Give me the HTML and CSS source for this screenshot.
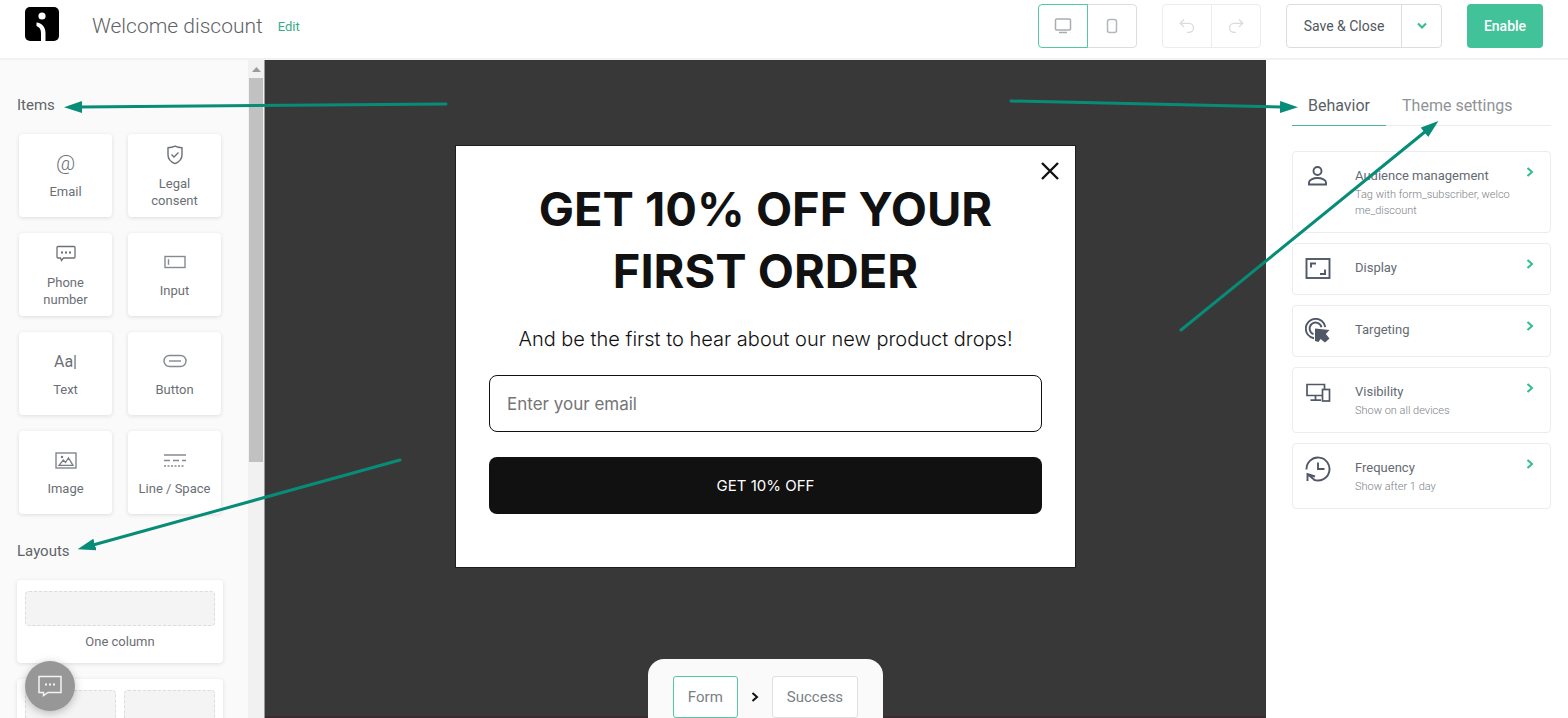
FILE: index.html
```html
<!DOCTYPE html>
<html lang="en">
<head>
    <meta charset="UTF-8">
    <meta name="viewport" content="width=device-width, initial-scale=1.0">
    <title>Welcome discount - Form builder</title>
    <link rel="stylesheet" href="styles.css">
</head>
<body>
    <header class="topbar">
        <a href="#" class="logo" aria-label="Home">
            <svg width="34" height="34" viewBox="0 0 34 34">
                <rect width="34" height="34" rx="5" fill="#000"/>
                <circle cx="17" cy="9" r="3.600" fill="#fff"/>
                <path d="M11.500 15.500c5.500.5 9 4.500 9 10.500v8h-4.500v-7c0-4-.5-6-4.500-8z" fill="#fff"/>
            </svg>
        </a>
        <h1 class="form-name">Welcome discount</h1>
        <a href="#" class="edit">Edit</a>
        <div class="actions">
            <div class="group devices">
                <button class="active" aria-label="Desktop">
                    <svg width="18" height="16" viewBox="0 0 18 16" fill="none" stroke="#a9adb1" stroke-width="1.500"><rect x="1.500" y="1" width="15" height="11" rx="1"/><path d="M5 14.500h8"/></svg>
                </button>
                <button aria-label="Mobile">
                    <svg width="12" height="16" viewBox="0 0 12 16" fill="none" stroke="#b4b7ba" stroke-width="1.500"><rect x="1.500" y="1.500" width="9" height="13" rx="2"/></svg>
                </button>
            </div>
            <div class="group history">
                <button aria-label="Undo">
                    <svg width="16" height="16" viewBox="0 0 16 16" fill="none" stroke="#d9dbdc" stroke-width="1.300"><path d="M5 1.500L1.200 5.300 5 9M1.200 5.300H10a4.500 4.500 0 0 1 0 9H8"/></svg>
                </button>
                <button aria-label="Redo">
                    <svg width="16" height="16" viewBox="0 0 16 16" fill="none" stroke="#d9dbdc" stroke-width="1.300"><path d="M11 1.500l3.800 3.800L11 9M14.800 5.300H6a4.500 4.500 0 0 0 0 9h2"/></svg>
                </button>
            </div>
            <div class="group save">
                <button>Save &amp; Close</button>
                <button aria-label="More save options">
                    <svg width="10" height="8" viewBox="0 0 10 8" fill="none" stroke="#2fbd8c" stroke-width="2"><path d="M1 1.500l4 4 4-4"/></svg>
                </button>
            </div>
            <button class="enable">Enable</button>
        </div>
    </header>

    <div class="workspace">
        <aside class="sidebar">
            <div class="sidebar-content">
                <h2>Items</h2>
                <div class="items">
                    <button class="item">
                        <span class="icon at">@</span>
                        Email
                    </button>
                    <button class="item">
                        <span class="icon"><svg width="18" height="20" viewBox="0 0 18 20" fill="none" stroke="#6b7077" stroke-width="1.400"><path d="M9 1.200c2.300 1.100 4.500 1.500 7 1.600V10c0 4-3 7-7 8.600C5 17 2 14 2 10V2.800c2.500-.1 4.700-.5 7-1.600z"/><path d="M5.500 9.500L8 12l4.500-4.500"/></svg></span>
                        Legal consent
                    </button>
                    <button class="item">
                        <span class="icon"><svg width="20" height="17" viewBox="0 0 20 17" fill="none" stroke="#6b7077" stroke-width="1.300"><path d="M2 1.500h16a1 1 0 0 1 1 1v9.500a1 1 0 0 1-1 1H7.500L5.500 15.500 4.500 13H2a1 1 0 0 1-1-1V2.500a1 1 0 0 1 1-1z"/><path d="M5 7.500h2m2 0h2m2 0h2" stroke-width="2"/></svg></span>
                        Phone number
                    </button>
                    <button class="item">
                        <span class="icon"><svg width="22" height="14" viewBox="0 0 22 14" fill="none" stroke="#858a90" stroke-width="1.400"><rect x="1" y="1.500" width="20" height="11"/><path d="M4.500 4.200v5.600"/></svg></span>
                        Input
                    </button>
                    <button class="item">
                        <span class="icon aa">Aa|</span>
                        Text
                    </button>
                    <button class="item">
                        <span class="icon"><svg width="24" height="14" viewBox="0 0 24 14" fill="none" stroke="#858a90" stroke-width="1.400"><rect x="1" y="1.500" width="22" height="11" rx="5.500"/><path d="M6 7h12"/></svg></span>
                        Button
                    </button>
                    <button class="item">
                        <span class="icon"><svg width="22" height="17" viewBox="0 0 22 17" fill="none" stroke="#777c83" stroke-width="1.300"><rect x="1" y="1" width="20" height="15"/><path d="M4 13.300L8.300 8l2.200 2.500L13.500 6l4.500 7.300z"/><circle cx="7" cy="5" r=".6"/></svg></span>
                        Image
                    </button>
                    <button class="item">
                        <span class="icon"><svg width="22" height="15" viewBox="0 0 22 15" fill="none" stroke="#858a90" stroke-width="1.500"><path d="M0 2h22"/><path d="M0 7.500h22" stroke-dasharray="6 3"/><path d="M0 13h21" stroke-dasharray="2 1.500"/></svg></span>
                        Line / Space
                    </button>
                </div>
                <h2>Layouts</h2>
                <div class="layouts">
                    <button class="layout">
                        <span class="columns"><span></span></span>
                        One column
                    </button>
                    <button class="layout" aria-label="Two columns">
                        <span class="columns"><span></span><span></span></span>
                    </button>
                </div>
            </div>
            <div class="scrollbar">
                <svg width="9" height="5" viewBox="0 0 9 5"><path d="M0 5l4.500-5L9 5z" fill="#9b9b9b"/></svg>
                <div class="thumb"></div>
            </div>
        </aside>

        <main class="canvas">
            <form class="popup">
                <button type="button" class="close" aria-label="Close">
                    <svg width="18" height="18" viewBox="0 0 18 18" stroke="#111" stroke-width="2.400"><path d="M1 1l16 16M17 1L1 17"/></svg>
                </button>
                <h2>GET 10% OFF YOUR FIRST ORDER</h2>
                <p>And be the first to hear about our new product drops!</p>
                <input type="email" placeholder="Enter your email" aria-label="Enter your email">
                <button type="button" class="submit">GET 10% OFF</button>
            </form>
            <nav class="steps">
                <button class="active">Form</button>
                <svg width="8" height="10" viewBox="0 0 8 10" fill="none" stroke="#111" stroke-width="2"><path d="M1.500 1L6 5 1.500 9"/></svg>
                <button>Success</button>
            </nav>
        </main>

        <aside class="settings">
            <nav class="tabs">
                <a href="#" class="active">Behavior</a>
                <a href="#">Theme settings</a>
            </nav>
            <a href="#" class="setting">
                <svg class="setting-icon" width="26" height="26" viewBox="0 0 26 26" fill="none" stroke="#505867" stroke-width="1.900"><circle cx="12.500" cy="7" r="4"/><path d="M4 20.500v-2c0-2.500 4-4.500 8.500-4.500s8.500 2 8.500 4.500v2z"/></svg>
                <span class="setting-text"><strong>Audience management</strong><small>Tag with form_subscriber, welcome_discount</small></span>
                <svg class="chevron" width="8" height="10" viewBox="0 0 8 10"><path d="M1.500 1L6 5 1.500 9"/></svg>
            </a>
            <a href="#" class="setting">
                <svg class="setting-icon" width="26" height="26" viewBox="0 0 26 26" fill="none" stroke="#505867" stroke-width="1.900"><rect x="1.500" y="3" width="23" height="19"/><path d="M6 11.500v-4h5M20 13.500v4.500h-5"/></svg>
                <span class="setting-text"><strong>Display</strong></span>
                <svg class="chevron" width="8" height="10" viewBox="0 0 8 10"><path d="M1.500 1L6 5 1.500 9"/></svg>
            </a>
            <a href="#" class="setting">
                <svg class="setting-icon" width="26" height="26" viewBox="0 0 26 26" fill="none" stroke="#505867" stroke-width="1.900"><path d="M9 20.300A9.800 9.800 0 1 1 20.300 9.200"/><path d="M8.500 16.200A6 6 0 1 1 16.500 9.300"/><path d="M10 10.500L24.500 12l-3.700 4 3.700 4.500-4.500 4-4.500-3.500L13.500 24 10 23z" fill="#505867" stroke="none"/></svg>
                <span class="setting-text"><strong>Targeting</strong></span>
                <svg class="chevron" width="8" height="10" viewBox="0 0 8 10"><path d="M1.500 1L6 5 1.500 9"/></svg>
            </a>
            <a href="#" class="setting">
                <svg class="setting-icon" width="26" height="26" viewBox="0 0 26 26" fill="none" stroke="#505867" stroke-width="1.700"><path d="M17 15.500H2v-11h17.500V9M10.500 15.500V20M5.500 20.200H16"/><rect x="17.500" y="9.500" width="7" height="11.500"/></svg>
                <span class="setting-text"><strong>Visibility</strong><small>Show on all devices</small></span>
                <svg class="chevron" width="8" height="10" viewBox="0 0 8 10"><path d="M1.500 1L6 5 1.500 9"/></svg>
            </a>
            <a href="#" class="setting">
                <svg class="setting-icon" width="26" height="26" viewBox="0 0 26 26" fill="none" stroke="#505867" stroke-width="1.900"><path d="M1.500 13.500A11.500 11.500 0 1 1 8.500 23.600"/><path d="M13 6.500V13h6.500"/><path d="M2.500 25V18l7.500 2.500M3 18.500l6 5"/></svg>
                <span class="setting-text"><strong>Frequency</strong><small>Show after 1 day</small></span>
                <svg class="chevron" width="8" height="10" viewBox="0 0 8 10"><path d="M1.500 1L6 5 1.500 9"/></svg>
            </a>
        </aside>
    </div>

    <button class="chat" aria-label="Chat">
        <svg width="26" height="22" viewBox="0 0 26 22" fill="none" stroke="#f3f3f3" stroke-width="1.500"><path d="M2 1.500h22v16H11L6.500 20.500v-3H2z"/><path d="M8 9.500h2m2 0h2m2 0h2" stroke-width="2.200"/></svg>
    </button>

    <!-- guide arrows over the editor -->
    <svg class="arrows" fill="none" stroke="#078d77" stroke-width="3" stroke-linecap="round">
        <defs>
            <marker id="head" markerUnits="userSpaceOnUse" markerWidth="18" markerHeight="12" refX="2" refY="6" orient="auto">
                <path d="M0 0l18 6-18 6z" fill="#078d77" stroke="none"/>
            </marker>
        </defs>
        <path d="M446 104L80 107" marker-end="url(#head)"/>
        <path d="M1011 101l271 6" marker-end="url(#head)"/>
        <path d="M400 460L93 545" marker-end="url(#head)"/>
        <path d="M1181 330l245-199" marker-end="url(#head)"/>
    </svg>
</body>
</html>
```
FILE: styles.css
```css
* { box-sizing: border-box; }
body { margin: 0; height: 100vh; display: flex; flex-direction: column; overflow: hidden; background-color: #fff; color: #5f646b; font-family: Roboto, Arial, sans-serif; font-size: 14px; }
button, input { font-family: inherit; margin: 0; }
button { cursor: pointer; }
h1, h2, p { margin: 0; }
a { text-decoration: none; }

/* top bar */
.topbar { display: flex; align-items: center; flex: none; height: 60px; padding: 0 25px 6px; border-bottom: 2px solid #f2f2f2; }
.logo { display: flex; margin-bottom: 4px; }
.form-name { margin-left: 33px; font-size: 21px; font-weight: 300; color: #5f6368; }
.edit { margin-left: 15px; font-size: 13px; color: #35ab89; }
.actions { display: flex; gap: 25px; margin-left: auto; }
.group { display: flex; }
.group button { display: flex; align-items: center; justify-content: center; width: 50px; height: 44px; padding: 0; background: #fff; border: 1px solid #dcdddf; color: #505660; font-size: 14px; }
.group button:first-child { border-radius: 4px 0 0 4px; }
.group button:last-child { margin-left: -1px; border-radius: 0 4px 4px 0; }
.group button.active { position: relative; border-color: #54c9a0; }
.history button { border-color: #ececec; }
.save button:first-child { width: 116px; }
.save button:last-child { width: 41px; }
.enable { width: 76px; height: 44px; padding: 0; border: 0; border-radius: 4px; background-color: #42c299; color: #fff; font-size: 14px; font-weight: 500; }

.workspace { display: flex; flex: 1; min-height: 0; }

/* left sidebar */
.sidebar { display: flex; flex: none; width: 265px; overflow: hidden; background-color: #fafafa; border-right: 1px solid #999; }
.sidebar-content { flex: 1; padding: 35px 25px 0 17px; }
.sidebar h2 { margin-bottom: 19px; font-size: 15px; line-height: 20px; font-weight: 400; }
.items { display: grid; grid-template-columns: 1fr 1fr; gap: 16px; margin: 0 2px 27px; }
.item, .layout { display: flex; flex-direction: column; height: 83px; background-color: #fff; border: 0; border-radius: 4px; box-shadow: 0 1px 4px rgba(0, 0, 0, 0.12); color: #6b6f75; font-size: 13px; line-height: 17px; }
.item { align-items: center; justify-content: center; gap: 8px; padding: 0 9px; }
.item .icon { display: flex; align-items: center; justify-content: center; height: 24px; }
.item .at { font-size: 21px; font-weight: 300; }
.item .aa { font-size: 16px; }
.layouts { display: flex; flex-direction: column; gap: 16px; }
.layout { justify-content: flex-start; padding: 11px 8px 0; }
.columns { display: flex; gap: 8px; margin-bottom: 7px; }
.columns span { flex: 1; height: 35px; background-color: #f4f4f4; border: 1px dashed #dcdcdc; border-radius: 4px; }
.scrollbar { display: flex; flex-direction: column; align-items: center; gap: 6px; flex: none; width: 16px; padding-top: 7px; background-color: #f1f1f1; }
.thumb { width: 14px; height: 59%; background-color: #c1c1c1; }

/* form preview */
.canvas { flex: 1; display: flex; flex-direction: column; align-items: center; background-color: #383838; border-bottom: 2px solid #3a2c33; }
.popup { position: relative; width: 619px; margin-top: 86px; padding: 32px 33px 53px; background-color: #fff; box-shadow: 0 0 0 1px #1e1e1e; font-family: Inter, sans-serif; color: #111; text-align: center; }
.popup .close { position: absolute; top: 16px; right: 16px; display: flex; padding: 0; border: 0; background: none; }
.popup h2 { font-size: 47px; line-height: 62px; font-weight: 700; }
.popup p { margin: 25px 0 24px; font-size: 20px; line-height: 24px; font-weight: 300; }
.popup input { display: block; width: 100%; height: 57px; padding: 0 17px; border: 1px solid #111; border-radius: 8px; font-size: 17px; }
.popup input::placeholder { color: #757575; }
.popup .submit { display: block; width: 100%; height: 57px; margin-top: 25px; border: 0; border-radius: 8px; background-color: #111; color: #fff; font-size: 15px; }
.steps { display: flex; align-items: center; gap: 13px; margin-top: auto; margin-bottom: -2px; padding: 17px 25px 0; background-color: #fafafa; border-radius: 16px 16px 0 0; }
.steps button { height: 42px; padding: 0 14px; background-color: #fff; border: 1px solid #dfdfdf; border-radius: 3px; color: #7a7f85; font-size: 15px; }
.steps .active { border-color: #54c9a0; }

/* right panel */
.settings { flex: none; width: 302px; padding: 31px 17px 0 26px; background-color: #fff; }
.tabs { display: flex; margin-bottom: 25px; border-bottom: 1px solid #ececec; }
.tabs a { padding: 5px 16px 9px; margin-bottom: -1px; border-bottom: 1px solid transparent; color: #909396; font-size: 16px; line-height: 20px; }
.tabs a.active { border-color: #4fb09c; color: #5a5f68; }
.setting { display: flex; min-height: 52px; margin-bottom: 10px; padding: 12px 16px 12px 12px; border: 1px solid #ececec; border-radius: 4px; }
.setting-icon { flex: none; margin-right: 24px; }
.setting-text { width: 160px; padding-bottom: 1px; }
.setting strong, .setting small { display: block; }
.setting strong { color: #656a72; font-size: 13px; line-height: 23px; font-weight: 400; }
.setting small { color: #7c8086; font-size: 11px; line-height: 16px; font-weight: 300; word-break: break-all; }
.chevron { margin: 3px 0 0 auto; fill: none; stroke: #2fbd8c; stroke-width: 2; }

.chat { position: fixed; left: 25px; bottom: 7px; display: flex; align-items: center; justify-content: center; width: 50px; height: 50px; padding: 0; border: 0; border-radius: 50%; background-color: #979797; box-shadow: 0 2px 8px rgba(0, 0, 0, 0.25); }
.arrows { position: absolute; top: 0; left: 0; width: 100%; height: 100%; pointer-events: none; }
```
